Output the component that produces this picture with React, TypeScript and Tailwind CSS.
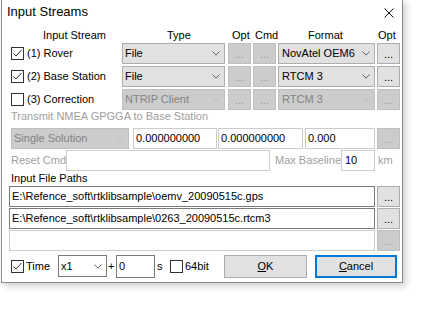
import clsx from "clsx";

const grayText = "text-[#a0a0a0]";

function Chevron({ color }: { color: string }) {
  return (
    <svg width="8" height="5" viewBox="0 0 8 5" className="shrink-0">
      <polyline points="0.5,0.5 4,4.2 7.5,0.5" fill="none" stroke={color} strokeWidth="1" />
    </svg>
  );
}

function Combo({ text, className, disabled, edit }: { text: string; className: string; disabled?: boolean; edit?: boolean }) {
  return (
    <div
      className={clsx(
        "flex shrink-0 items-center justify-between border pl-[2px] pr-[4px]",
        className,
        disabled
          ? "border-[#bfbfbf] bg-[#cccccc] text-[#838383]"
          : edit
            ? "border-[#7a7a7a] bg-white text-black"
            : "border-[#adadad] bg-[#e1e1e1] text-black"
      )}
    >
      <span className="whitespace-nowrap">{text}</span>
      <Chevron color={disabled ? "#bfbfbf" : "#606060"} />
    </div>
  );
}

function Dots({ className, disabled }: { className?: string; disabled?: boolean }) {
  return (
    <div
      className={clsx(
        "flex h-full w-[23px] shrink-0 items-center justify-center border pt-[2px]",
        className,
        disabled ? "border-[#bfbfbf] bg-[#cccccc] text-[#9a9a9a]" : "border-[#adadad] bg-[#e1e1e1] text-black"
      )}
    >
      ...
    </div>
  );
}

function Field({ text, className, light }: { text?: string; className: string; light?: boolean }) {
  return (
    <div
      className={clsx(
        "flex h-full shrink-0 items-center border bg-white pl-[2px] whitespace-nowrap",
        className,
        light ? "border-[#cccccc]" : "border-[#7a7a7a]"
      )}
    >
      {text}
    </div>
  );
}

function Check({ checked }: { checked?: boolean }) {
  return (
    <div className="h-[13px] w-[13px] shrink-0 border border-[#333333] bg-white">
      {checked && (
        <svg width="11" height="11" viewBox="0 0 11 11">
          <polyline points="1.5,5.5 4,8 9.5,2" fill="none" stroke="#333333" strokeWidth="1" />
        </svg>
      )}
    </div>
  );
}

const streams = [
  { label: "(1) Rover", checked: true, type: "File", format: "NovAtel OEM6", off: false },
  { label: "(2) Base Station", checked: true, type: "File", format: "RTCM 3", off: false },
  { label: "(3) Correction", checked: false, type: "NTRIP Client", format: "RTCM 3", off: true },
];

const paths = [
  "E:\\Refence_soft\\rtklibsample\\oemv_20090515c.gps",
  "E:\\Refence_soft\\rtklibsample\\0263_20090515c.rtcm3",
  "",
];

export default function App() {
  return (
    <div className="h-[331px] w-[428px] bg-white font-['Liberation_Sans',Arial,sans-serif] text-[11px] leading-[13px] text-black">
      <div className="ml-px flex h-[283px] w-[402px] flex-col border-x border-b border-[#8c8c8c] bg-white shadow-[3px_3px_7px_rgba(0,0,0,0.2)]">
        <div className="flex h-[27px] shrink-0 items-start justify-between pl-[5px] pr-[8px] pt-[4px]">
          <span className="text-[13px] leading-[16px]">Input Streams</span>
          <svg width="10" height="10" viewBox="0 0 10 10" className="mt-[4px]">
            <path d="M0.5 0.5 L9.5 9.5 M9.5 0.5 L0.5 9.5" stroke="#111111" strokeWidth="1" />
          </svg>
        </div>

        <div className="flex h-[16px] items-center whitespace-nowrap pl-[9px]">
          <div className="w-[111px] pl-[32px]">Input Stream</div>
          <div className="w-[103px] pl-[45px]">Type</div>
          <div className="ml-[3px] w-[23px] pl-[4px]">Opt</div>
          <div className="ml-[2px] w-[23px] pl-[2px]">Cmd</div>
          <div className="ml-[2px] w-[97px] pl-[30px]">Format</div>
          <div className="ml-[2px] w-[23px] pl-[1px]">Opt</div>
        </div>

        <div className="flex flex-col gap-[2px]">
          {streams.map((s) => (
            <div key={s.label} className="flex h-[21px] items-center pl-[9px]">
              <div className="flex w-[111px] items-center whitespace-nowrap">
                <Check checked={s.checked} />
                <span className="ml-[3px]">{s.label}</span>
              </div>
              <Combo text={s.type} className="h-full w-[103px]" disabled={s.off} />
              <Dots className="ml-[3px]" disabled />
              <Dots className="ml-[2px]" disabled />
              <Combo text={s.format} className="ml-[2px] h-full w-[97px] pl-[3px]" disabled={s.off} />
              <Dots className="ml-[2px]" disabled={s.off} />
            </div>
          ))}
        </div>

        <div className={clsx("h-[18px] whitespace-nowrap pl-[9px] leading-[12px]", grayText)}>
          Transmit NMEA GPGGA to Base Station
        </div>

        <div className="flex h-[21px] items-center pl-[9px]">
          <Combo text="Single Solution" className="h-full w-[118px]" disabled />
          <Field text="0.000000000" className="ml-[4px] w-[84px]" light />
          <Field text="0.000000000" className="ml-[1px] w-[85px]" light />
          <Field text="0.000" className="ml-[2px] w-[70px]" light />
          <Dots className="ml-[2px]" disabled />
        </div>

        <div className="mt-[1px] flex h-[21px] items-center whitespace-nowrap pl-[9px]">
          <span className={clsx("w-[55px]", grayText)}>Reset Cmd</span>
          <Field className="w-[204px]" light />
          <span className={clsx("ml-[5px] w-[66px]", grayText)}>Max Baseline</span>
          <Field text="10" className="w-[34px] pl-[3px]" light />
          <span className={clsx("ml-[3px]", grayText)}>km</span>
        </div>

        <div className="h-[15px] pl-[9px] pt-[1px]">Input File Paths</div>

        <div className="flex flex-col gap-[1px]">
          {paths.map((p, i) => (
            <div key={i} className="flex h-[21px] items-center pl-[7px]">
              <Field text={p} className="w-[366px] pl-[1px]" light={i === 2} />
              <Dots className="ml-[2px]" disabled={i === 2} />
            </div>
          ))}
        </div>

        <div className="mt-[4px] flex h-[23px] items-center whitespace-nowrap pl-[9px]">
          <Check checked />
          <span className="ml-[2px] w-[32px]">Time</span>
          <Combo text="x1" className="h-[22px] w-[49px] self-start" edit />
          <span className="ml-[1px] w-[8px]">+</span>
          <Field text="0" className="h-[22px] w-[39px] self-start" />
          <span className="ml-[2px] w-[13px]">s</span>
          <Check />
          <span className="ml-[2px] w-[39px]">64bit</span>
          <div className="flex h-full w-[83px] items-center justify-center border border-[#adadad] bg-[#e1e1e1]">
            <span>
              <span className="underline">O</span>K
            </span>
          </div>
          <div className="ml-[8px] flex h-full w-[82px] items-center justify-center border-2 border-[#0078d7] bg-[#e1e1e1]">
            <span>
              <span className="underline">C</span>ancel
            </span>
          </div>
        </div>
      </div>
    </div>
  );
}
